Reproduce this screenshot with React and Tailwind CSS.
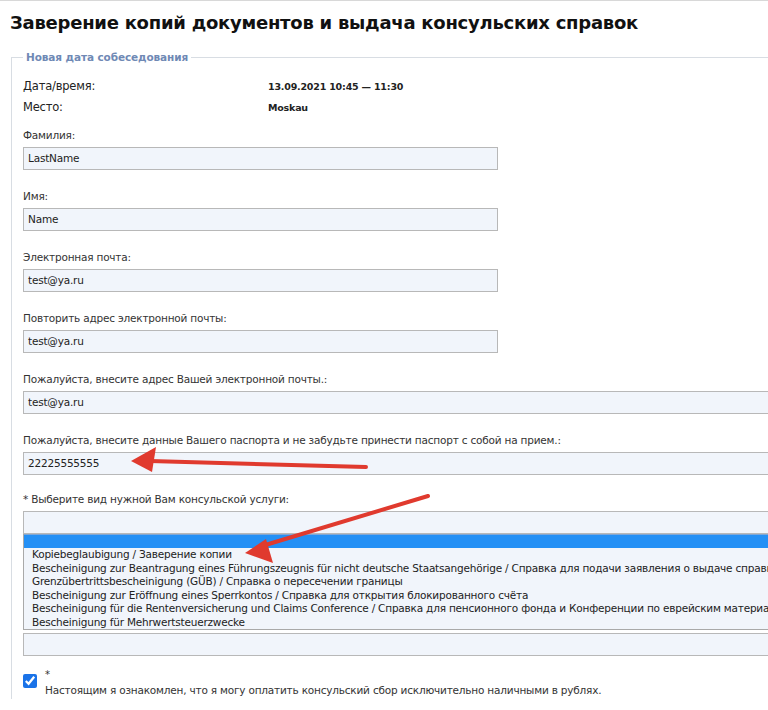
import React from 'react';

const fields = [
  { label: 'Фамилия:', value: 'LastName', wide: false },
  { label: 'Имя:', value: 'Name', wide: false },
  { label: 'Электронная почта:', value: 'test@ya.ru', wide: false },
  { label: 'Повторить адрес электронной почты:', value: 'test@ya.ru', wide: false },
  { label: 'Пожалуйста, внесите адрес Вашей электронной почты.:', value: 'test@ya.ru', wide: true },
  {
    label: 'Пожалуйста, внесите данные Вашего паспорта и не забудьте принести паспорт с собой на прием.:',
    value: '22225555555',
    wide: true,
  },
];

const services = [
  'Kopiebeglaubigung / Заверение копии',
  'Bescheinigung zur Beantragung eines Führungszeugnis für nicht deutsche Staatsangehörige / Справка для подачи заявления о выдаче справки',
  'Grenzübertrittsbescheinigung (GÜB) / Справка о пересечении границы',
  'Bescheinigung zur Eröffnung eines Sperrkontos / Справка для открытия блокированного счёта',
  'Bescheinigung für die Rentenversicherung und Claims Conference / Справка для пенсионного фонда и Конференции по еврейским материальным',
  'Bescheinigung für Mehrwertsteuerzwecke',
];

function Field({ label, value, wide }) {
  return (
    <div className="mb-[19px]">
      <div className="h-[14px] leading-[14px] text-[10.5px] tracking-[-0.2px] text-[#333] mb-[5px]">{label}</div>
      <div
        className={`h-[23px] border border-[#b8b8b8] bg-[#f1f5fb] pl-[4px] text-[10.5px] tracking-[-0.2px] leading-[21px] text-[#222] ${
          wide ? 'w-[800px]' : 'w-[475px]'
        }`}
      >
        {value}
      </div>
    </div>
  );
}

export default function App() {
  return (
    <div className="relative w-[768px] h-[710px] overflow-hidden bg-white border-t border-[#d8d8d8] font-['DejaVu_Sans',Verdana,sans-serif] text-[#222]">
      <h1 className="pl-[10px] pt-[10px] h-[40px] text-[18px] tracking-[-0.25px] leading-[24px] font-bold text-[#111] whitespace-nowrap">
        Заверение копий документов и выдача консульских справок
      </h1>

      <fieldset className="ml-[11px] mt-[9px] w-[900px] border-l border-t border-[#d8dde3] pl-[11px] pt-[12px] min-w-0">
        <legend className="px-[3px] text-[10.5px] tracking-[-0.1px] leading-[14px] font-bold text-[#6f89b5]">
          Новая дата собеседования
        </legend>

        <div className="grid grid-cols-[245px_1fr] text-[11.5px] tracking-[-0.2px] leading-[21px] items-center">
          <div>Дата/время:</div>
          <div className="text-[9.5px] font-bold">13.09.2021 10:45 — 11:30</div>
          <div>Место:</div>
          <div className="text-[9.5px] font-bold">Moskau</div>
        </div>

        <div className="mt-[10px]">
          {fields.map((f) => (
            <Field key={f.label} {...f} />
          ))}
        </div>

        <div className="-mt-[2px]">
          <div className="h-[14px] leading-[14px] text-[10.5px] tracking-[-0.2px] text-[#333] mb-[5px]">
            * Выберите вид нужной Вам консульской услуги:
          </div>
          <div className="w-[800px] h-[23px] border border-[#b8b8b8] bg-[#f1f5fb]" />
          <div className="w-[800px] border border-t-0 border-[#a9a9a9] bg-[#f1f5fb]">
            <div className="h-[14px] bg-[#2490f5] border-t border-[#7fa7d6]" />
            <div className="pl-[8px] text-[10.5px] tracking-[-0.2px] leading-[13.5px] text-[#222] whitespace-nowrap">
              {services.map((s) => (
                <div key={s}>{s}</div>
              ))}
            </div>
          </div>
          <div className="mt-[3px] w-[800px] h-[23px] border border-[#b8b8b8] bg-[#f1f5fb]" />
        </div>

        <div className="mt-[12px] flex items-start gap-[8px]">
          <input
            type="checkbox"
            defaultChecked
            className="mt-[6px] w-[14px] h-[14px] accent-[#1a73e8]"
          />
          <div className="text-[10.5px] tracking-[-0.2px] text-[#333]">
            <div className="h-[13px] leading-[13px] text-[10px]">*</div>
            <div className="leading-[18px]">
              Настоящим я ознакомлен, что я могу оплатить консульский сбор исключительно наличными в рублях.
            </div>
          </div>
        </div>
      </fieldset>

      <svg className="absolute inset-0 pointer-events-none" width="768" height="710">
        <g fill="#e03a2e" stroke="#e03a2e" strokeLinecap="round">
          <line x1="366" y1="466" x2="150" y2="460" strokeWidth="4" />
          <polygon points="131,460 156,446 152,471" stroke="none" />
          <line x1="428" y1="495" x2="262" y2="545" strokeWidth="4" />
          <polygon points="245,552 266,538 273,562" stroke="none" />
        </g>
      </svg>
    </div>
  );
}
